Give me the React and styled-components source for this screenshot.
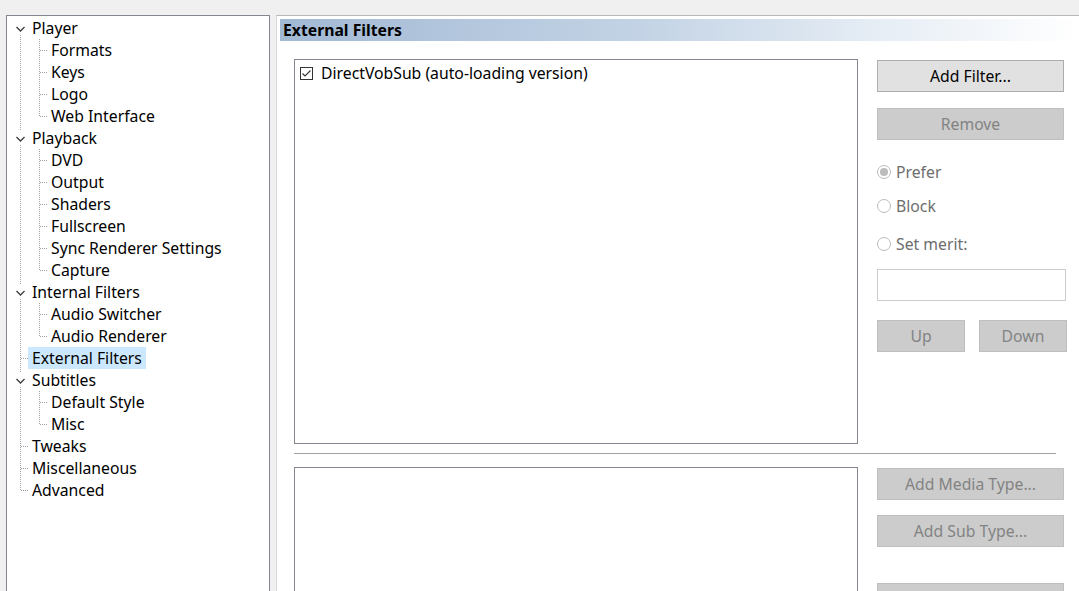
import React from 'react';
import styled, { createGlobalStyle } from 'styled-components';

const GlobalStyle = createGlobalStyle`
  html, body {
    margin: 0;
    padding: 0;
    background: #f0f0f0;
  }
  body {
    font-family: "Noto Sans", "Open Sans", sans-serif;
    font-size: 15.75px;
    color: #000;
  }
`;

const Window = styled.div`
  display: flex;
  gap: 6px;
  height: 591px;
  padding: 15px 0 0 6px;
  box-sizing: border-box;
  overflow: hidden;
`;

const TreePanel = styled.div`
  width: 264px;
  flex-shrink: 0;
  box-sizing: border-box;
  background: #fff;
  border: 1px solid #828790;
  border-bottom: none;
  padding-top: 1px;
`;

const TreeRow = styled.div`
  display: flex;
  align-items: center;
  height: 22px;
`;

const GuideSvg = styled.svg`
  flex-shrink: 0;
  display: block;
  line {
    stroke: #a0a0a0;
    stroke-width: 1;
    stroke-dasharray: 1 1;
  }
  polyline {
    fill: none;
    stroke: #3c3c3c;
    stroke-width: 1.3;
  }
`;

const TreeLabel = styled.span`
  height: 22px;
  line-height: 22px;
  padding: 0 4px;
  white-space: nowrap;
  background: ${(p) => (p.$selected ? '#cce8ff' : 'transparent')};
`;

const Page = styled.div`
  flex: 1;
  min-width: 0;
  background: #fff;
  border-top: 1px solid #b9b9b9;
  border-left: 1px solid #d9d9d9;
  padding: 3px 0 0 3px;
`;

const Header = styled.div`
  height: 22px;
  line-height: 22px;
  padding-left: 3px;
  font-weight: bold;
  background: linear-gradient(to right, #a2b9d4 0%, #c3d3e5 45%, #e6edf5 75%, #ffffff 100%);
`;

const Body = styled.div`
  padding: 18px 0 0 14px;
`;

const Section = styled.div`
  display: flex;
  gap: 19px;
  margin-top: ${(p) => p.$mt || 0}px;
`;

const ListBox = styled.div`
  width: 564px;
  height: ${(p) => p.$h}px;
  flex-shrink: 0;
  box-sizing: border-box;
  border: 1px solid #828790;
  border-bottom: ${(p) => (p.$open ? 'none' : '1px solid #828790')};
  background: #fff;
`;

const ListItem = styled.div`
  display: flex;
  align-items: center;
  gap: 8px;
  height: 20px;
  margin-top: 3px;
  padding-left: 5px;
`;

const CheckBox = styled.span`
  width: 13px;
  height: 13px;
  box-sizing: border-box;
  border: 1px solid #333;
  background: #fff;
  display: flex;
  align-items: center;
  justify-content: center;
`;

const SideColumn = styled.div`
  display: flex;
  flex-direction: column;
  align-items: flex-start;
`;

const Button = styled.button`
  width: ${(p) => p.$w || 187}px;
  height: 32px;
  margin-top: ${(p) => p.$mt || 0}px;
  padding: 0;
  box-sizing: border-box;
  font-family: inherit;
  font-size: 15.75px;
  border: 1px solid #adadad;
  background: #e1e1e1;
  color: #000;
  &:disabled {
    background: #cccccc;
    border-color: #bfbfbf;
    color: #838383;
  }
`;

const ButtonPair = styled.div`
  display: flex;
  gap: 14px;
  margin-top: ${(p) => p.$mt || 0}px;
`;

const RadioRow = styled.label`
  display: flex;
  align-items: center;
  gap: 5px;
  height: 20px;
  margin-top: ${(p) => p.$mt || 0}px;
  color: #6d6d6d;
`;

const RadioCircle = styled.span`
  width: 14px;
  height: 14px;
  box-sizing: border-box;
  border-radius: 50%;
  border: 1px solid #bcbcbc;
  background: #fff;
  display: flex;
  align-items: center;
  justify-content: center;
  &::after {
    content: '';
    width: 8px;
    height: 8px;
    border-radius: 50%;
    background: ${(p) => (p.$checked ? '#bcbcbc' : 'transparent')};
  }
`;

const MeritInput = styled.input`
  width: 189px;
  height: 32px;
  margin-top: ${(p) => p.$mt || 0}px;
  box-sizing: border-box;
  border: 1px solid #cccccc;
  background: #fff;
  font-family: inherit;
  font-size: 15px;
`;

const Separator = styled.div`
  width: 762px;
  height: 1px;
  margin-top: 9px;
  background: #a0a0a0;
`;

const tree = [
  { label: 'Player', children: ['Formats', 'Keys', 'Logo', 'Web Interface'] },
  { label: 'Playback', children: ['DVD', 'Output', 'Shaders', 'Fullscreen', 'Sync Renderer Settings', 'Capture'] },
  { label: 'Internal Filters', children: ['Audio Switcher', 'Audio Renderer'] },
  { label: 'External Filters', selected: true },
  { label: 'Subtitles', children: ['Default Style', 'Misc'] },
  { label: 'Tweaks' },
  { label: 'Miscellaneous' },
  { label: 'Advanced' },
];

function Guide({ kind, first, last }) {
  const w = kind === 'pass' || kind === 'blank' ? 19 : 21;
  return (
    <GuideSvg width={w} height={22} viewBox={`0 0 ${w} 22`}>
      {(kind === 'pass' || kind === 'tee') && <line x1="13.5" y1="0" x2="13.5" y2="22" />}
      {kind === 'elbow' && <line x1="13.5" y1="0" x2="13.5" y2="12" />}
      {(kind === 'tee' || kind === 'elbow') && <line x1="14" y1="11.5" x2="21" y2="11.5" />}
      {kind === 'toggle' && (
        <>
          {!first && <line x1="13.5" y1="0" x2="13.5" y2="4" />}
          {!last && <line x1="13.5" y1="18" x2="13.5" y2="22" />}
          <polyline points="9.5,10 13.5,14 17.5,10" />
          <line x1="24" y1="11.5" x2="26" y2="11.5" />
        </>
      )}
    </GuideSvg>
  );
}

function Tree() {
  const rows = [];
  tree.forEach((node, i) => {
    const isLast = i === tree.length - 1;
    rows.push(
      <TreeRow key={node.label}>
        <Guide kind={node.children ? 'toggle' : isLast ? 'elbow' : 'tee'} first={i === 0} last={isLast} />
        <TreeLabel $selected={node.selected}>{node.label}</TreeLabel>
      </TreeRow>
    );
    (node.children || []).forEach((child, j) => {
      rows.push(
        <TreeRow key={node.label + child}>
          <Guide kind={isLast ? 'blank' : 'pass'} />
          <Guide kind={j === node.children.length - 1 ? 'elbow' : 'tee'} />
          <TreeLabel>{child}</TreeLabel>
        </TreeRow>
      );
    });
  });
  return <TreePanel>{rows}</TreePanel>;
}

function App() {
  return (
    <>
      <GlobalStyle />
      <Window>
        <Tree />
        <Page>
          <Header>External Filters</Header>
          <Body>
            <Section>
              <ListBox $h={385}>
                <ListItem>
                  <CheckBox>
                    <svg width="11" height="11" viewBox="0 0 11 11">
                      <polyline points="1.5,5.5 4,8 9.5,2.5" fill="none" stroke="#333" strokeWidth="1.1" />
                    </svg>
                  </CheckBox>
                  DirectVobSub (auto-loading version)
                </ListItem>
              </ListBox>
              <SideColumn>
                <Button $mt={1}>Add Filter...</Button>
                <Button $mt={16} disabled>Remove</Button>
                <RadioRow $mt={22}>
                  <RadioCircle $checked />
                  Prefer
                </RadioRow>
                <RadioRow $mt={14}>
                  <RadioCircle />
                  Block
                </RadioRow>
                <RadioRow $mt={18}>
                  <RadioCircle />
                  Set merit:
                </RadioRow>
                <MeritInput $mt={15} disabled />
                <ButtonPair $mt={19}>
                  <Button $w={88} disabled>Up</Button>
                  <Button $w={88} disabled>Down</Button>
                </ButtonPair>
              </SideColumn>
            </Section>
            <Separator />
            <Section $mt={13}>
              <ListBox $h={200} $open />
              <SideColumn>
                <Button $mt={1} disabled>Add Media Type...</Button>
                <Button $mt={15} disabled>Add Sub Type...</Button>
                <Button $mt={36} disabled aria-label="Remove" />
              </SideColumn>
            </Section>
          </Body>
        </Page>
      </Window>
    </>
  );
}

export default App;
